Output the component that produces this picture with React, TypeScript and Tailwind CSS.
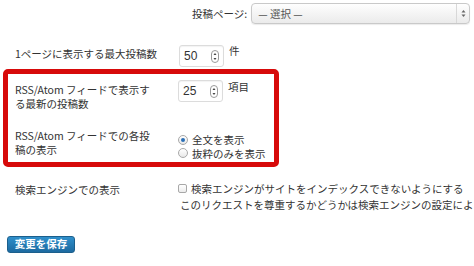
import React from "react";

function Spinner() {
  return (
    <svg width="8" height="13" viewBox="0 0 8 13" className="block">
      <rect x="0.5" y="0.5" width="7" height="12" rx="3.5" fill="#fff" stroke="#9a9a9a" />
      <path d="M2.5 5 L4 3 L5.5 5 Z" fill="#444" />
      <path d="M2.5 8 L4 10 L5.5 8 Z" fill="#444" />
    </svg>
  );
}

function NumInput({ value }: { value: string }) {
  return (
    <div className="flex items-center justify-between shrink-0 w-[45px] h-[22px] border border-[#dcdcdc] rounded-[3px] bg-white pl-[4px] pr-[4px] shadow-[inset_0_1px_1px_rgba(0,0,0,0.05)]">
      <span className="text-[12px] leading-none text-[#333] font-['Liberation_Sans',sans-serif]">{value}</span>
      <Spinner />
    </div>
  );
}

function Radio({ checked }: { checked?: boolean }) {
  return (
    <span className="flex items-center justify-center w-[10px] h-[10px] rounded-full border border-[#a8a8a8] bg-gradient-to-b from-white to-[#e8e8e8] shrink-0">
      {checked && <span className="w-[4px] h-[4px] rounded-full bg-[#2b6fb6]" />}
    </span>
  );
}

export default function App() {
  return (
    <div className="w-[474px] h-[266px] overflow-hidden bg-white text-[#333] text-[10.5px] leading-[13.5px] font-['Noto_Sans_CJK_JP','Noto_Sans',sans-serif]">
      {/* select row */}
      <div className="flex items-center mt-[3px] ml-[192px]">
        <span className="whitespace-nowrap shrink-0">投稿ページ:</span>
        <div className="ml-[4px] w-[219px] h-[21px] shrink-0 flex items-center border border-[#c9c9c9] rounded-[4px] bg-gradient-to-b from-[#fefefe] to-[#ebebeb] shadow-[0_1px_1px_rgba(0,0,0,0.08)]">
          <span className="flex-1 pl-[6px] text-[#555] whitespace-nowrap">— 選択 —</span>
          <div className="w-[13px] h-full border-l border-[#d8d8d8] flex items-center justify-center">
            <svg width="5" height="9" viewBox="0 0 5 9">
              <path d="M0.5 3.5 L2.5 1 L4.5 3.5 Z" fill="#666" />
              <path d="M0.5 5.5 L2.5 8 L4.5 5.5 Z" fill="#666" />
            </svg>
          </div>
        </div>
      </div>

      {/* posts per page */}
      <div className="flex items-start mt-[21px]">
        <div className="w-[179px] shrink-0 pl-[15px] pt-[2px] whitespace-nowrap">1ページに表示する最大投稿数</div>
        <NumInput value="50" />
        <span className="ml-[5px] mt-[-1px] shrink-0">件</span>
      </div>

      {/* red highlighted box */}
      <div className="ml-[3px] mt-[2px] w-[276px] h-[98px] border-[5px] border-[#d70a0a] rounded-[5px] pt-[6px]">
        <div className="flex items-start">
          <div className="w-[170px] shrink-0 pl-[7px] pt-[3px] whitespace-nowrap">
            RSS/Atom フィードで表示す
            <br />
            る最新の投稿数
          </div>
          <NumInput value="25" />
          <span className="ml-[5px] shrink-0">項目</span>
        </div>
        <div className="flex items-start mt-[19px]">
          <div className="w-[170px] shrink-0 pl-[7px] whitespace-nowrap">
            RSS/Atom フィードでの各投
            <br />
            稿の表示
          </div>
          <div className="flex flex-col pt-[4px] leading-[13.5px]">
            <label className="flex items-center gap-[4px] whitespace-nowrap">
              <Radio checked />
              <span>全文を表示</span>
            </label>
            <label className="flex items-center gap-[4px] whitespace-nowrap">
              <Radio />
              <span>抜粋のみを表示</span>
            </label>
          </div>
        </div>
      </div>

      {/* search engine */}
      <div className="flex items-start mt-[15px]">
        <div className="w-[178px] shrink-0 pl-[15px] pt-[1px] whitespace-nowrap">検索エンジンでの表示</div>
        <div className="flex flex-col whitespace-nowrap shrink-0">
          <label className="flex items-center gap-[4px]">
            <span className="w-[9px] h-[9px] border border-[#a8a8a8] rounded-[2px] bg-gradient-to-b from-white to-[#ececec] shrink-0" />
            <span>検索エンジンがサイトをインデックスできないようにする</span>
          </label>
          <p className="mt-[2px] ml-[2px]">このリクエストを尊重するかどうかは検索エンジンの設定によります。</p>
        </div>
      </div>

      {/* save button */}
      <div className="mt-[25px] ml-[7px]">
        <button className="w-[68px] h-[17px] rounded-[3px] border border-[#1c5f8c] bg-gradient-to-b from-[#2f8fcb] to-[#1d6aa0] text-white font-bold text-[10.5px] leading-none flex items-center justify-center">
          変更を保存
        </button>
      </div>
    </div>
  );
}
